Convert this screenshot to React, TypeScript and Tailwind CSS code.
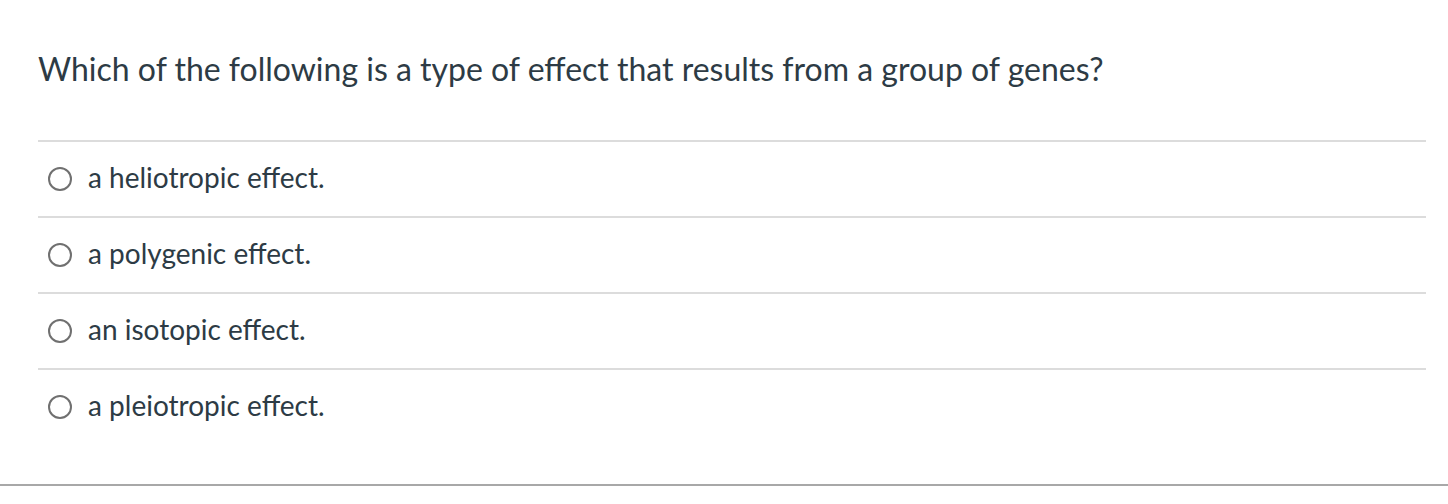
const options = [
  "a heliotropic effect.",
  "a polygenic effect.",
  "an isotopic effect.",
  "a pleiotropic effect.",
];

export default function App() {
  return (
    <div className="w-[1448px] h-[504px] bg-white font-['Lato',sans-serif] text-[#2d3b45]">
      <div className="pl-[38px] pr-[22px]">
        <div className="h-[140px] pt-[46px] text-[32px] leading-[45px]">
          Which of the following is a type of effect that results from a group of genes?
        </div>
        <ul>
          {options.map((opt) => (
            <li
              key={opt}
              className="h-[76px] border-t-2 border-[#dcdcdc] flex items-center pl-[10px] gap-[16px] pb-[4px]"
            >
              <span className="w-[24px] h-[24px] rounded-full border-2 border-[#707070] shrink-0 mt-[4px]" />
              <span className="text-[28px]">{opt}</span>
            </li>
          ))}
        </ul>
      </div>
      <div className="mt-[40px] border-b-2 border-[#a8a8a8]" />
    </div>
  );
}
